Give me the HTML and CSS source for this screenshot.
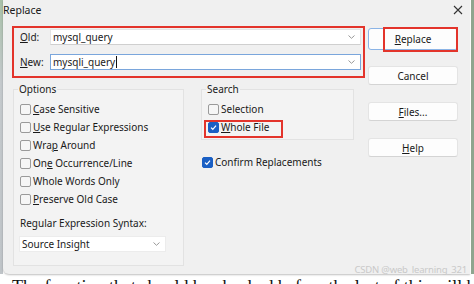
FILE: index.html
```html
<!DOCTYPE html>
<html lang="en">
<head>
  <meta charset="UTF-8">
  <title>Replace</title>
  <link rel="stylesheet" href="styles.css">
</head>
<body>
  <div class="screen">
    <div class="edge-left"></div>
    <div class="dialog">
      <div class="titlebar">
        <span class="title">Replace</span>
        <svg class="close" width="10" height="10" viewBox="0 0 10 10"><path d="M1 1L9 9M9 1L1 9" stroke="#333" stroke-width="1.1" fill="none"/></svg>
      </div>

      <div class="content">
        <div class="main">
          <div class="fields">
            <div class="field">
              <label><u>O</u>ld:</label>
              <div class="combo">
                <span>mysql_query</span>
                <svg class="chev" width="7" height="4" viewBox="0 0 7 4"><path d="M0.5 0.5L3.5 3.3L6.5 0.5" stroke="#999" fill="none"/></svg>
              </div>
            </div>
            <div class="field">
              <label><u>N</u>ew:</label>
              <div class="combo focus">
                <span class="typed">mysqli_query</span>
                <svg class="chev" width="7" height="4" viewBox="0 0 7 4"><path d="M0.5 0.5L3.5 3.3L6.5 0.5" stroke="#999" fill="none"/></svg>
              </div>
            </div>
          </div>

          <div class="groups">
            <fieldset class="group options">
              <legend>Options</legend>
              <div class="check"><span class="box"></span><span><u>C</u>ase Sensitive</span></div>
              <div class="check"><span class="box"></span><span><u>U</u>se Regular Expressions</span></div>
              <div class="check"><span class="box"></span><span>Wra<u>p</u> Around</span></div>
              <div class="check"><span class="box"></span><span>On<u>e</u> Occurrence/Line</span></div>
              <div class="check"><span class="box"></span><span>Whole Words Only</span></div>
              <div class="check"><span class="box"></span><span><u>P</u>reserve Old Case</span></div>
              <div class="syntax-label">Regular Expression Syntax:</div>
              <div class="combo select">
                <span>Source Insight</span>
                <svg class="chev" width="7" height="4" viewBox="0 0 7 4"><path d="M0.5 0.5L3.5 3.3L6.5 0.5" stroke="#999" fill="none"/></svg>
              </div>
            </fieldset>

            <div class="side">
              <fieldset class="group search">
                <legend>Search</legend>
                <div class="check"><span class="box"></span><span>Selection</span></div>
                <div class="check marked">
                  <span class="box on"><svg width="9" height="9" viewBox="0 0 9 9"><path d="M2 4.6L3.8 6.3L7 2.7" stroke="#fff" stroke-width="1.2" fill="none"/></svg></span>
                  <span><u>W</u>hole File</span>
                </div>
              </fieldset>
              <div class="check confirm">
                <span class="box on"><svg width="9" height="9" viewBox="0 0 9 9"><path d="M2 4.6L3.8 6.3L7 2.7" stroke="#fff" stroke-width="1.2" fill="none"/></svg></span>
                <span>Conf<u>i</u>rm Replacements</span>
              </div>
            </div>
          </div>
        </div>

        <div class="buttons">
          <button class="btn default"><u>R</u>eplace</button>
          <button class="btn">Cancel</button>
          <button class="btn"><u>F</u>iles...</button>
          <button class="btn"><u>H</u>elp</button>
        </div>
      </div>
    </div>
    <div class="edge-right"></div>
    <div class="watermark">CSDN @web_learning_321</div>
  </div>
  <div class="below">The function that should be checked before the last of this will be</div>
</body>
</html>
```

FILE: styles.css
```css
* { margin: 0; padding: 0; box-sizing: border-box; }
body {
  font-family: 'Noto Sans', sans-serif;
  font-size: 10px;
  color: #1a1a1a;
  background: #fff;
  width: 474px;
  height: 284px;
  overflow: hidden;
}
u { text-decoration-thickness: 1px; text-underline-offset: 1px; }

.screen {
  position: relative;
  display: flex;
  height: 274px;
}
.edge-left {
  width: 3px;
  background: linear-gradient(#a9c1a9, #c4c9cc 30%, #bfc4c8);
}
.edge-right {
  width: 4px;
  border-left: 1px solid #fafafa;
  background: #8ea58f;
}
.dialog {
  width: 467px;
  background: #f0f0f0;
  border-bottom-left-radius: 6px;
  box-shadow: 0 1px 2px rgba(0,0,0,0.25);
}

.titlebar {
  height: 22px;
  display: flex;
  align-items: center;
  justify-content: space-between;
  padding: 0 7px 3px 0;
  font-size: 10.5px;
}
.close { display: block; }

.content {
  display: flex;
  gap: 3px;
  padding: 4px 0 0 9px;
}
.main { width: 353px; }

.fields {
  height: 52px;
  border: 2px solid #e3342b;
  padding: 1px 2px 0 6px;
  display: flex;
  flex-direction: column;
  gap: 9px;
}
.field {
  display: flex;
  align-items: center;
}
.field label { width: 30px; }

.combo {
  flex: 1;
  height: 16px;
  background: #fff;
  border: 1px solid #e4e4e4;
  border-bottom-color: #cfcfcf;
  display: flex;
  align-items: center;
  justify-content: space-between;
  padding: 0 5px 0 2px;
}
.combo.focus { border-color: #7aa6dc; }
.typed {
  border-right: 1px solid #111;
  padding-right: 1px;
  line-height: 12px;
}
.chev { display: block; }

.groups {
  display: flex;
  gap: 17px;
  margin-top: 4px;
  padding-left: 1px;
}
.group {
  border: 1px solid #e2e2e2;
  background: #f3f3f3;
  padding: 4px 6px 0 6px;
}
.group legend {
  line-height: 14px;
  margin-left: -2px;
  padding: 0 1px;
}
.options {
  width: 171px;
  height: 184px;
}
.search {
  width: 153px;
  padding-bottom: 3px;
}

.check {
  position: relative;
  display: flex;
  align-items: center;
  gap: 2px;
  height: 18px;
  white-space: nowrap;
}
.box {
  width: 11px;
  height: 11px;
  border: 1px solid #9a9a9a;
  border-radius: 2px;
  background: #f6f6f6;
  display: flex;
  align-items: center;
  justify-content: center;
}
.box.on {
  background: #1a5fc4;
  border-color: #1a5fc4;
}
.marked::after {
  content: '';
  position: absolute;
  left: -4px;
  top: 2px;
  width: 75px;
  height: 14px;
  border: 2px solid #e3342b;
}
.confirm {
  margin-top: 13px;
  margin-left: 1px;
}

.syntax-label {
  margin-top: 8px;
  line-height: 14px;
}
.select {
  width: 147px;
  flex: none;
  margin-top: 6px;
  margin-left: -1px;
  border-color: #ececec;
}

.buttons {
  width: 90px;
  padding-top: 2px;
  display: flex;
  flex-direction: column;
}
.btn {
  position: relative;
  height: 19px;
  margin-bottom: 17px;
  font: inherit;
  color: #1a1a1a;
  background: #fdfdfd;
  border: 1px solid #e4e4e4;
  border-bottom-color: #d4d4d4;
  border-radius: 3px;
}
.btn.default {
  height: 22px;
  margin-bottom: 16px;
  border-color: #8bb4e6;
}
.btn.default::after {
  content: '';
  position: absolute;
  left: 14px;
  top: -2px;
  width: 71px;
  height: 21px;
  border: 2px solid #e3342b;
}

.watermark {
  position: absolute;
  right: 7px;
  bottom: -2px;
  font-size: 9.5px;
  color: #c9c9c9;
  letter-spacing: -0.2px;
}
.below {
  height: 10px;
  overflow: hidden;
  padding: 3px 0 0 12px;
  font-family: 'Liberation Serif', serif;
  font-size: 18px;
  line-height: 20px;
  color: #111;
  white-space: nowrap;
}
```
